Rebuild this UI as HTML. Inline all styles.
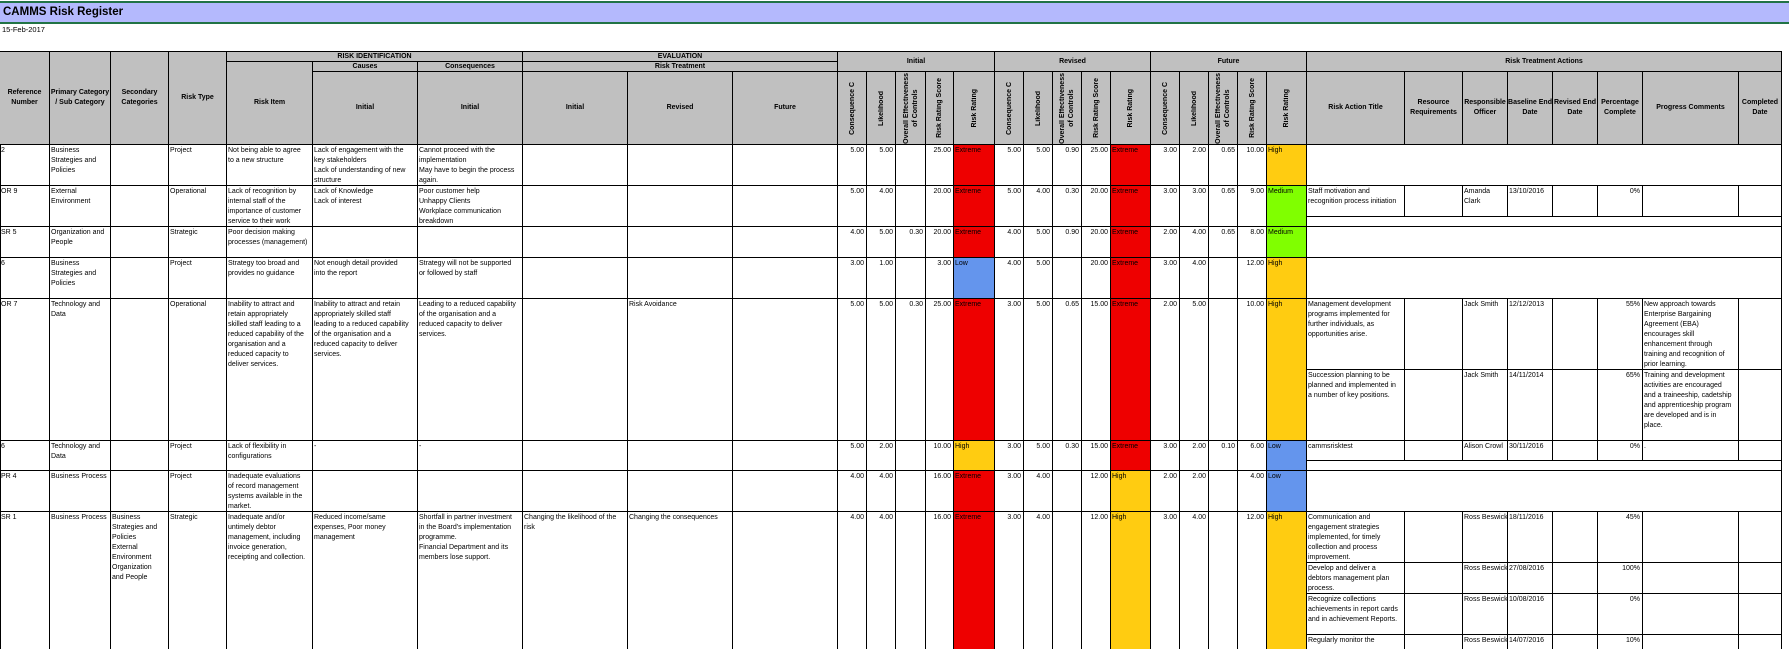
<!DOCTYPE html>
<html style="overflow:hidden;height:649px"><head><meta charset="utf-8"><style>
html,body{overflow:hidden}
body{margin:0;width:1789px;height:649px;overflow:hidden;background:#fff;position:relative;font-family:"Liberation Sans",sans-serif;}
.c{position:absolute;box-sizing:border-box;border-right:1px solid #000;border-bottom:1px solid #000;font-size:7px;line-height:10px;padding:1px 1px;overflow:hidden;white-space:nowrap;color:#000}
.h{background:#c0c0c0;font-weight:bold;display:flex;align-items:center;justify-content:center;text-align:center;padding:0}
.v{writing-mode:vertical-rl;transform:rotate(180deg);font-weight:bold;line-height:9px;text-align:center}
.n{text-align:right;padding-right:2px}
.r{background:#ee0000}.y{background:#ffcc11}.g{background:#80ff00}.b{background:#6495ed}
</style></head><body>
<div style="position:absolute;left:0;top:1px;width:1789px;height:2px;background:#217346"></div>
<div style="position:absolute;left:0;top:3px;width:1789px;height:19px;background:#b4b9fd;font-weight:bold;font-size:11.5px;line-height:19px;padding-left:3px;box-sizing:border-box">CAMMS Risk Register</div>
<div style="position:absolute;left:0;top:22px;width:1789px;height:2px;background:#217346"></div>
<div style="position:absolute;left:2px;top:25px;font-size:7.5px;line-height:10px">15-Feb-2017</div>
<div style="position:absolute;left:0;top:51px;width:1782px;height:598px;border-top:1px solid #000;border-left:1px solid #000;box-sizing:border-box"></div>

<!-- header -->
<div class="c h" style="left:0;top:52px;width:50px;height:93px">Reference<br>Number</div>
<div class="c h" style="left:50px;top:52px;width:61px;height:93px">Primary Category<br>/ Sub Category</div>
<div class="c h" style="left:111px;top:52px;width:58px;height:93px">Secondary<br>Categories</div>
<div class="c h" style="left:169px;top:52px;width:58px;height:93px">Risk Type</div>
<div class="c h" style="left:227px;top:52px;width:296px;height:10px">RISK IDENTIFICATION</div>
<div class="c h" style="left:227px;top:62px;width:86px;height:83px">Risk Item</div>
<div class="c h" style="left:313px;top:62px;width:105px;height:10px">Causes</div>
<div class="c h" style="left:418px;top:62px;width:105px;height:10px">Consequences</div>
<div class="c h" style="left:313px;top:72px;width:105px;height:73px">Initial</div>
<div class="c h" style="left:418px;top:72px;width:105px;height:73px">Initial</div>
<div class="c h" style="left:523px;top:52px;width:315px;height:10px">EVALUATION</div>
<div class="c h" style="left:523px;top:62px;width:315px;height:10px">Risk Treatment</div>
<div class="c h" style="left:523px;top:72px;width:105px;height:73px">Initial</div>
<div class="c h" style="left:628px;top:72px;width:105px;height:73px">Revised</div>
<div class="c h" style="left:733px;top:72px;width:105px;height:73px">Future</div>
<div class="c h" style="left:838px;top:52px;width:157px;height:20px">Initial</div>
<div class="c h" style="left:995px;top:52px;width:156px;height:20px">Revised</div>
<div class="c h" style="left:1151px;top:52px;width:156px;height:20px">Future</div>
<div class="c h" style="left:1307px;top:52px;width:475px;height:20px">Risk Treatment Actions</div>

<div class="c h" style="left:838px;top:72px;width:29px;height:73px"><span class="v">Consequence C</span></div>
<div class="c h" style="left:867px;top:72px;width:29px;height:73px"><span class="v">Likelihood</span></div>
<div class="c h" style="left:896px;top:72px;width:30px;height:73px"><span class="v">Overall Effectiveness<br>of Controls</span></div>
<div class="c h" style="left:926px;top:72px;width:28px;height:73px"><span class="v">Risk Rating Score</span></div>
<div class="c h" style="left:954px;top:72px;width:41px;height:73px"><span class="v">Risk Rating</span></div>
<div class="c h" style="left:995px;top:72px;width:29px;height:73px"><span class="v">Consequence C</span></div>
<div class="c h" style="left:1024px;top:72px;width:29px;height:73px"><span class="v">Likelihood</span></div>
<div class="c h" style="left:1053px;top:72px;width:29px;height:73px"><span class="v">Overall Effectiveness<br>of Controls</span></div>
<div class="c h" style="left:1082px;top:72px;width:29px;height:73px"><span class="v">Risk Rating Score</span></div>
<div class="c h" style="left:1111px;top:72px;width:40px;height:73px"><span class="v">Risk Rating</span></div>
<div class="c h" style="left:1151px;top:72px;width:29px;height:73px"><span class="v">Consequence C</span></div>
<div class="c h" style="left:1180px;top:72px;width:29px;height:73px"><span class="v">Likelihood</span></div>
<div class="c h" style="left:1209px;top:72px;width:29px;height:73px"><span class="v">Overall Effectiveness<br>of Controls</span></div>
<div class="c h" style="left:1238px;top:72px;width:29px;height:73px"><span class="v">Risk Rating Score</span></div>
<div class="c h" style="left:1267px;top:72px;width:40px;height:73px"><span class="v">Risk Rating</span></div>
<div class="c h" style="left:1307px;top:72px;width:98px;height:73px">Risk Action Title</div>
<div class="c h" style="left:1405px;top:72px;width:58px;height:73px">Resource<br>Requirements</div>
<div class="c h" style="left:1463px;top:72px;width:45px;height:73px">Responsible<br>Officer</div>
<div class="c h" style="left:1508px;top:72px;width:45px;height:73px">Baseline End<br>Date</div>
<div class="c h" style="left:1553px;top:72px;width:45px;height:73px">Revised End<br>Date</div>
<div class="c h" style="left:1598px;top:72px;width:45px;height:73px">Percentage<br>Complete</div>
<div class="c h" style="left:1643px;top:72px;width:96px;height:73px">Progress Comments</div>
<div class="c h" style="left:1739px;top:72px;width:43px;height:73px">Completed<br>Date</div>

<!-- Row 1 -->
<div class="c" style="left:0;top:145px;width:50px;height:41px">2</div>
<div class="c" style="left:50px;top:145px;width:61px;height:41px">Business<br>Strategies and<br>Policies</div>
<div class="c" style="left:111px;top:145px;width:58px;height:41px"></div>
<div class="c" style="left:169px;top:145px;width:58px;height:41px">Project</div>
<div class="c" style="left:227px;top:145px;width:86px;height:41px">Not being able to agree<br>to a new structure</div>
<div class="c" style="left:313px;top:145px;width:105px;height:41px">Lack of engagement with the<br>key stakeholders<br>Lack of understanding of new<br>structure</div>
<div class="c" style="left:418px;top:145px;width:105px;height:41px">Cannot proceed with the<br>implementation<br>May have to begin the process<br>again.</div>
<div class="c" style="left:523px;top:145px;width:105px;height:41px"></div>
<div class="c" style="left:628px;top:145px;width:105px;height:41px"></div>
<div class="c" style="left:733px;top:145px;width:105px;height:41px"></div>
<div class="c n" style="left:838px;top:145px;width:29px;height:41px">5.00</div>
<div class="c n" style="left:867px;top:145px;width:29px;height:41px">5.00</div>
<div class="c n" style="left:896px;top:145px;width:30px;height:41px"></div>
<div class="c n" style="left:926px;top:145px;width:28px;height:41px">25.00</div>
<div class="c r" style="left:954px;top:145px;width:41px;height:41px">Extreme</div>
<div class="c n" style="left:995px;top:145px;width:29px;height:41px">5.00</div>
<div class="c n" style="left:1024px;top:145px;width:29px;height:41px">5.00</div>
<div class="c n" style="left:1053px;top:145px;width:29px;height:41px">0.90</div>
<div class="c n" style="left:1082px;top:145px;width:29px;height:41px">25.00</div>
<div class="c r" style="left:1111px;top:145px;width:40px;height:41px">Extreme</div>
<div class="c n" style="left:1151px;top:145px;width:29px;height:41px">3.00</div>
<div class="c n" style="left:1180px;top:145px;width:29px;height:41px">2.00</div>
<div class="c n" style="left:1209px;top:145px;width:29px;height:41px">0.65</div>
<div class="c n" style="left:1238px;top:145px;width:29px;height:41px">10.00</div>
<div class="c y" style="left:1267px;top:145px;width:40px;height:41px">High</div>
<div class="c" style="left:1307px;top:145px;width:475px;height:41px"></div>

<!-- Row 2 -->
<div class="c" style="left:0;top:186px;width:50px;height:41px">OR 9</div>
<div class="c" style="left:50px;top:186px;width:61px;height:41px">External<br>Environment</div>
<div class="c" style="left:111px;top:186px;width:58px;height:41px"></div>
<div class="c" style="left:169px;top:186px;width:58px;height:41px">Operational</div>
<div class="c" style="left:227px;top:186px;width:86px;height:41px">Lack of recognition by<br>internal staff of the<br>importance of customer<br>service to their work</div>
<div class="c" style="left:313px;top:186px;width:105px;height:41px">Lack of Knowledge<br>Lack of interest</div>
<div class="c" style="left:418px;top:186px;width:105px;height:41px">Poor customer help<br>Unhappy Clients<br>Workplace communication<br>breakdown</div>
<div class="c" style="left:523px;top:186px;width:105px;height:41px"></div>
<div class="c" style="left:628px;top:186px;width:105px;height:41px"></div>
<div class="c" style="left:733px;top:186px;width:105px;height:41px"></div>
<div class="c n" style="left:838px;top:186px;width:29px;height:41px">5.00</div>
<div class="c n" style="left:867px;top:186px;width:29px;height:41px">4.00</div>
<div class="c n" style="left:896px;top:186px;width:30px;height:41px"></div>
<div class="c n" style="left:926px;top:186px;width:28px;height:41px">20.00</div>
<div class="c r" style="left:954px;top:186px;width:41px;height:41px">Extreme</div>
<div class="c n" style="left:995px;top:186px;width:29px;height:41px">5.00</div>
<div class="c n" style="left:1024px;top:186px;width:29px;height:41px">4.00</div>
<div class="c n" style="left:1053px;top:186px;width:29px;height:41px">0.30</div>
<div class="c n" style="left:1082px;top:186px;width:29px;height:41px">20.00</div>
<div class="c r" style="left:1111px;top:186px;width:40px;height:41px">Extreme</div>
<div class="c n" style="left:1151px;top:186px;width:29px;height:41px">3.00</div>
<div class="c n" style="left:1180px;top:186px;width:29px;height:41px">3.00</div>
<div class="c n" style="left:1209px;top:186px;width:29px;height:41px">0.65</div>
<div class="c n" style="left:1238px;top:186px;width:29px;height:41px">9.00</div>
<div class="c g" style="left:1267px;top:186px;width:40px;height:41px">Medium</div>
<div class="c" style="left:1307px;top:186px;width:98px;height:31px">Staff motivation and<br>recognition process initiation</div>
<div class="c" style="left:1405px;top:186px;width:58px;height:31px"></div>
<div class="c" style="left:1463px;top:186px;width:45px;height:31px">Amanda<br>Clark</div>
<div class="c" style="left:1508px;top:186px;width:45px;height:31px">13/10/2016</div>
<div class="c" style="left:1553px;top:186px;width:45px;height:31px"></div>
<div class="c n" style="left:1598px;top:186px;width:45px;height:31px">0%</div>
<div class="c" style="left:1643px;top:186px;width:96px;height:31px"></div>
<div class="c" style="left:1739px;top:186px;width:43px;height:31px"></div>
<div class="c" style="left:1307px;top:217px;width:475px;height:10px"></div>

<!-- Row 3 -->
<div class="c" style="left:0;top:227px;width:50px;height:31px">SR 5</div>
<div class="c" style="left:50px;top:227px;width:61px;height:31px">Organization and<br>People</div>
<div class="c" style="left:111px;top:227px;width:58px;height:31px"></div>
<div class="c" style="left:169px;top:227px;width:58px;height:31px">Strategic</div>
<div class="c" style="left:227px;top:227px;width:86px;height:31px">Poor decision making<br>processes (management)</div>
<div class="c" style="left:313px;top:227px;width:105px;height:31px"></div>
<div class="c" style="left:418px;top:227px;width:105px;height:31px"></div>
<div class="c" style="left:523px;top:227px;width:105px;height:31px"></div>
<div class="c" style="left:628px;top:227px;width:105px;height:31px"></div>
<div class="c" style="left:733px;top:227px;width:105px;height:31px"></div>
<div class="c n" style="left:838px;top:227px;width:29px;height:31px">4.00</div>
<div class="c n" style="left:867px;top:227px;width:29px;height:31px">5.00</div>
<div class="c n" style="left:896px;top:227px;width:30px;height:31px">0.30</div>
<div class="c n" style="left:926px;top:227px;width:28px;height:31px">20.00</div>
<div class="c r" style="left:954px;top:227px;width:41px;height:31px">Extreme</div>
<div class="c n" style="left:995px;top:227px;width:29px;height:31px">4.00</div>
<div class="c n" style="left:1024px;top:227px;width:29px;height:31px">5.00</div>
<div class="c n" style="left:1053px;top:227px;width:29px;height:31px">0.90</div>
<div class="c n" style="left:1082px;top:227px;width:29px;height:31px">20.00</div>
<div class="c r" style="left:1111px;top:227px;width:40px;height:31px">Extreme</div>
<div class="c n" style="left:1151px;top:227px;width:29px;height:31px">2.00</div>
<div class="c n" style="left:1180px;top:227px;width:29px;height:31px">4.00</div>
<div class="c n" style="left:1209px;top:227px;width:29px;height:31px">0.65</div>
<div class="c n" style="left:1238px;top:227px;width:29px;height:31px">8.00</div>
<div class="c g" style="left:1267px;top:227px;width:40px;height:31px">Medium</div>
<div class="c" style="left:1307px;top:227px;width:475px;height:31px"></div>

<!-- Row 4 -->
<div class="c" style="left:0;top:258px;width:50px;height:41px">6</div>
<div class="c" style="left:50px;top:258px;width:61px;height:41px">Business<br>Strategies and<br>Policies</div>
<div class="c" style="left:111px;top:258px;width:58px;height:41px"></div>
<div class="c" style="left:169px;top:258px;width:58px;height:41px">Project</div>
<div class="c" style="left:227px;top:258px;width:86px;height:41px">Strategy too broad and<br>provides no guidance</div>
<div class="c" style="left:313px;top:258px;width:105px;height:41px">Not enough detail provided<br>into the report</div>
<div class="c" style="left:418px;top:258px;width:105px;height:41px">Strategy will not be supported<br>or followed by staff</div>
<div class="c" style="left:523px;top:258px;width:105px;height:41px"></div>
<div class="c" style="left:628px;top:258px;width:105px;height:41px"></div>
<div class="c" style="left:733px;top:258px;width:105px;height:41px"></div>
<div class="c n" style="left:838px;top:258px;width:29px;height:41px">3.00</div>
<div class="c n" style="left:867px;top:258px;width:29px;height:41px">1.00</div>
<div class="c n" style="left:896px;top:258px;width:30px;height:41px"></div>
<div class="c n" style="left:926px;top:258px;width:28px;height:41px">3.00</div>
<div class="c b" style="left:954px;top:258px;width:41px;height:41px">Low</div>
<div class="c n" style="left:995px;top:258px;width:29px;height:41px">4.00</div>
<div class="c n" style="left:1024px;top:258px;width:29px;height:41px">5.00</div>
<div class="c n" style="left:1053px;top:258px;width:29px;height:41px"></div>
<div class="c n" style="left:1082px;top:258px;width:29px;height:41px">20.00</div>
<div class="c r" style="left:1111px;top:258px;width:40px;height:41px">Extreme</div>
<div class="c n" style="left:1151px;top:258px;width:29px;height:41px">3.00</div>
<div class="c n" style="left:1180px;top:258px;width:29px;height:41px">4.00</div>
<div class="c n" style="left:1209px;top:258px;width:29px;height:41px"></div>
<div class="c n" style="left:1238px;top:258px;width:29px;height:41px">12.00</div>
<div class="c y" style="left:1267px;top:258px;width:40px;height:41px">High</div>
<div class="c" style="left:1307px;top:258px;width:475px;height:41px"></div>

<!-- Row 5 -->
<div class="c" style="left:0;top:299px;width:50px;height:142px">OR 7</div>
<div class="c" style="left:50px;top:299px;width:61px;height:142px">Technology and<br>Data</div>
<div class="c" style="left:111px;top:299px;width:58px;height:142px"></div>
<div class="c" style="left:169px;top:299px;width:58px;height:142px">Operational</div>
<div class="c" style="left:227px;top:299px;width:86px;height:142px">Inability to attract and<br>retain appropriately<br>skilled staff leading to a<br>reduced capability of the<br>organisation and a<br>reduced capacity to<br>deliver services.</div>
<div class="c" style="left:313px;top:299px;width:105px;height:142px">Inability to attract and retain<br>appropriately skilled staff<br>leading to a reduced capability<br>of the organisation and a<br>reduced capacity to deliver<br>services.</div>
<div class="c" style="left:418px;top:299px;width:105px;height:142px">Leading to a reduced capability<br>of the organisation and a<br>reduced capacity to deliver<br>services.</div>
<div class="c" style="left:523px;top:299px;width:105px;height:142px"></div>
<div class="c" style="left:628px;top:299px;width:105px;height:142px">Risk Avoidance</div>
<div class="c" style="left:733px;top:299px;width:105px;height:142px"></div>
<div class="c n" style="left:838px;top:299px;width:29px;height:142px">5.00</div>
<div class="c n" style="left:867px;top:299px;width:29px;height:142px">5.00</div>
<div class="c n" style="left:896px;top:299px;width:30px;height:142px">0.30</div>
<div class="c n" style="left:926px;top:299px;width:28px;height:142px">25.00</div>
<div class="c r" style="left:954px;top:299px;width:41px;height:142px">Extreme</div>
<div class="c n" style="left:995px;top:299px;width:29px;height:142px">3.00</div>
<div class="c n" style="left:1024px;top:299px;width:29px;height:142px">5.00</div>
<div class="c n" style="left:1053px;top:299px;width:29px;height:142px">0.65</div>
<div class="c n" style="left:1082px;top:299px;width:29px;height:142px">15.00</div>
<div class="c r" style="left:1111px;top:299px;width:40px;height:142px">Extreme</div>
<div class="c n" style="left:1151px;top:299px;width:29px;height:142px">2.00</div>
<div class="c n" style="left:1180px;top:299px;width:29px;height:142px">5.00</div>
<div class="c n" style="left:1209px;top:299px;width:29px;height:142px"></div>
<div class="c n" style="left:1238px;top:299px;width:29px;height:142px">10.00</div>
<div class="c y" style="left:1267px;top:299px;width:40px;height:142px">High</div>
<div class="c" style="left:1307px;top:299px;width:98px;height:71px">Management development<br>programs implemented for<br>further individuals, as<br>opportunities arise.</div>
<div class="c" style="left:1405px;top:299px;width:58px;height:71px"></div>
<div class="c" style="left:1463px;top:299px;width:45px;height:71px">Jack Smith</div>
<div class="c" style="left:1508px;top:299px;width:45px;height:71px">12/12/2013</div>
<div class="c" style="left:1553px;top:299px;width:45px;height:71px"></div>
<div class="c n" style="left:1598px;top:299px;width:45px;height:71px">55%</div>
<div class="c" style="left:1643px;top:299px;width:96px;height:71px">New approach towards<br>Enterprise Bargaining<br>Agreement (EBA)<br>encourages skill<br>enhancement through<br>training and recognition of<br>prior learning.</div>
<div class="c" style="left:1739px;top:299px;width:43px;height:71px"></div>
<div class="c" style="left:1307px;top:370px;width:98px;height:71px">Succession planning to be<br>planned and implemented in<br>a number of key positions.</div>
<div class="c" style="left:1405px;top:370px;width:58px;height:71px"></div>
<div class="c" style="left:1463px;top:370px;width:45px;height:71px">Jack Smith</div>
<div class="c" style="left:1508px;top:370px;width:45px;height:71px">14/11/2014</div>
<div class="c" style="left:1553px;top:370px;width:45px;height:71px"></div>
<div class="c n" style="left:1598px;top:370px;width:45px;height:71px">65%</div>
<div class="c" style="left:1643px;top:370px;width:96px;height:71px">Training and development<br>activities are encouraged<br>and a traineeship, cadetship<br>and apprenticeship program<br>are developed and is in<br>place.</div>
<div class="c" style="left:1739px;top:370px;width:43px;height:71px"></div>

<!-- Row 6 -->
<div class="c" style="left:0;top:441px;width:50px;height:30px">6</div>
<div class="c" style="left:50px;top:441px;width:61px;height:30px">Technology and<br>Data</div>
<div class="c" style="left:111px;top:441px;width:58px;height:30px"></div>
<div class="c" style="left:169px;top:441px;width:58px;height:30px">Project</div>
<div class="c" style="left:227px;top:441px;width:86px;height:30px">Lack of flexibility in<br>configurations</div>
<div class="c" style="left:313px;top:441px;width:105px;height:30px">-</div>
<div class="c" style="left:418px;top:441px;width:105px;height:30px">-</div>
<div class="c" style="left:523px;top:441px;width:105px;height:30px"></div>
<div class="c" style="left:628px;top:441px;width:105px;height:30px"></div>
<div class="c" style="left:733px;top:441px;width:105px;height:30px"></div>
<div class="c n" style="left:838px;top:441px;width:29px;height:30px">5.00</div>
<div class="c n" style="left:867px;top:441px;width:29px;height:30px">2.00</div>
<div class="c n" style="left:896px;top:441px;width:30px;height:30px"></div>
<div class="c n" style="left:926px;top:441px;width:28px;height:30px">10.00</div>
<div class="c y" style="left:954px;top:441px;width:41px;height:30px">High</div>
<div class="c n" style="left:995px;top:441px;width:29px;height:30px">3.00</div>
<div class="c n" style="left:1024px;top:441px;width:29px;height:30px">5.00</div>
<div class="c n" style="left:1053px;top:441px;width:29px;height:30px">0.30</div>
<div class="c n" style="left:1082px;top:441px;width:29px;height:30px">15.00</div>
<div class="c r" style="left:1111px;top:441px;width:40px;height:30px">Extreme</div>
<div class="c n" style="left:1151px;top:441px;width:29px;height:30px">3.00</div>
<div class="c n" style="left:1180px;top:441px;width:29px;height:30px">2.00</div>
<div class="c n" style="left:1209px;top:441px;width:29px;height:30px">0.10</div>
<div class="c n" style="left:1238px;top:441px;width:29px;height:30px">6.00</div>
<div class="c b" style="left:1267px;top:441px;width:40px;height:30px">Low</div>
<div class="c" style="left:1307px;top:441px;width:98px;height:20px">cammsrisktest</div>
<div class="c" style="left:1405px;top:441px;width:58px;height:20px"></div>
<div class="c" style="left:1463px;top:441px;width:45px;height:20px">Alison Crowl</div>
<div class="c" style="left:1508px;top:441px;width:45px;height:20px">30/11/2016</div>
<div class="c" style="left:1553px;top:441px;width:45px;height:20px"></div>
<div class="c n" style="left:1598px;top:441px;width:45px;height:20px">0%</div>
<div class="c" style="left:1643px;top:441px;width:96px;height:20px">.</div>
<div class="c" style="left:1739px;top:441px;width:43px;height:20px"></div>
<div class="c" style="left:1307px;top:461px;width:475px;height:10px"></div>

<!-- Row 7 -->
<div class="c" style="left:0;top:471px;width:50px;height:41px">PR 4</div>
<div class="c" style="left:50px;top:471px;width:61px;height:41px">Business Process</div>
<div class="c" style="left:111px;top:471px;width:58px;height:41px"></div>
<div class="c" style="left:169px;top:471px;width:58px;height:41px">Project</div>
<div class="c" style="left:227px;top:471px;width:86px;height:41px">Inadequate evaluations<br>of record management<br>systems available in the<br>market.</div>
<div class="c" style="left:313px;top:471px;width:105px;height:41px"></div>
<div class="c" style="left:418px;top:471px;width:105px;height:41px"></div>
<div class="c" style="left:523px;top:471px;width:105px;height:41px"></div>
<div class="c" style="left:628px;top:471px;width:105px;height:41px"></div>
<div class="c" style="left:733px;top:471px;width:105px;height:41px"></div>
<div class="c n" style="left:838px;top:471px;width:29px;height:41px">4.00</div>
<div class="c n" style="left:867px;top:471px;width:29px;height:41px">4.00</div>
<div class="c n" style="left:896px;top:471px;width:30px;height:41px"></div>
<div class="c n" style="left:926px;top:471px;width:28px;height:41px">16.00</div>
<div class="c r" style="left:954px;top:471px;width:41px;height:41px">Extreme</div>
<div class="c n" style="left:995px;top:471px;width:29px;height:41px">3.00</div>
<div class="c n" style="left:1024px;top:471px;width:29px;height:41px">4.00</div>
<div class="c n" style="left:1053px;top:471px;width:29px;height:41px"></div>
<div class="c n" style="left:1082px;top:471px;width:29px;height:41px">12.00</div>
<div class="c y" style="left:1111px;top:471px;width:40px;height:41px">High</div>
<div class="c n" style="left:1151px;top:471px;width:29px;height:41px">2.00</div>
<div class="c n" style="left:1180px;top:471px;width:29px;height:41px">2.00</div>
<div class="c n" style="left:1209px;top:471px;width:29px;height:41px"></div>
<div class="c n" style="left:1238px;top:471px;width:29px;height:41px">4.00</div>
<div class="c b" style="left:1267px;top:471px;width:40px;height:41px">Low</div>
<div class="c" style="left:1307px;top:471px;width:475px;height:41px"></div>

<!-- Row 8 -->
<div class="c" style="left:0;top:512px;width:50px;height:138px">SR 1</div>
<div class="c" style="left:50px;top:512px;width:61px;height:138px">Business Process</div>
<div class="c" style="left:111px;top:512px;width:58px;height:138px">Business<br>Strategies and<br>Policies<br>External<br>Environment<br>Organization<br>and People</div>
<div class="c" style="left:169px;top:512px;width:58px;height:138px">Strategic</div>
<div class="c" style="left:227px;top:512px;width:86px;height:138px">Inadequate and/or<br>untimely debtor<br>management, including<br>invoice generation,<br>receipting and collection.</div>
<div class="c" style="left:313px;top:512px;width:105px;height:138px">Reduced income/same<br>expenses, Poor money<br>management</div>
<div class="c" style="left:418px;top:512px;width:105px;height:138px">Shortfall in partner investment<br>in the Board's implementation<br>programme.<br>Financial Department and its<br>members lose support.</div>
<div class="c" style="left:523px;top:512px;width:105px;height:138px">Changing the likelihood of the<br>risk</div>
<div class="c" style="left:628px;top:512px;width:105px;height:138px">Changing the consequences</div>
<div class="c" style="left:733px;top:512px;width:105px;height:138px"></div>
<div class="c n" style="left:838px;top:512px;width:29px;height:138px">4.00</div>
<div class="c n" style="left:867px;top:512px;width:29px;height:138px">4.00</div>
<div class="c n" style="left:896px;top:512px;width:30px;height:138px"></div>
<div class="c n" style="left:926px;top:512px;width:28px;height:138px">16.00</div>
<div class="c r" style="left:954px;top:512px;width:41px;height:138px">Extreme</div>
<div class="c n" style="left:995px;top:512px;width:29px;height:138px">3.00</div>
<div class="c n" style="left:1024px;top:512px;width:29px;height:138px">4.00</div>
<div class="c n" style="left:1053px;top:512px;width:29px;height:138px"></div>
<div class="c n" style="left:1082px;top:512px;width:29px;height:138px">12.00</div>
<div class="c y" style="left:1111px;top:512px;width:40px;height:138px">High</div>
<div class="c n" style="left:1151px;top:512px;width:29px;height:138px">3.00</div>
<div class="c n" style="left:1180px;top:512px;width:29px;height:138px">4.00</div>
<div class="c n" style="left:1209px;top:512px;width:29px;height:138px"></div>
<div class="c n" style="left:1238px;top:512px;width:29px;height:138px">12.00</div>
<div class="c y" style="left:1267px;top:512px;width:40px;height:138px">High</div>

<div class="c" style="left:1307px;top:512px;width:98px;height:51px">Communication and<br>engagement strategies<br>implemented, for timely<br>collection and process<br>improvement.</div>
<div class="c" style="left:1405px;top:512px;width:58px;height:51px"></div>
<div class="c" style="left:1463px;top:512px;width:45px;height:51px">Ross Beswick</div>
<div class="c" style="left:1508px;top:512px;width:45px;height:51px">18/11/2016</div>
<div class="c" style="left:1553px;top:512px;width:45px;height:51px"></div>
<div class="c n" style="left:1598px;top:512px;width:45px;height:51px">45%</div>
<div class="c" style="left:1643px;top:512px;width:96px;height:51px"></div>
<div class="c" style="left:1739px;top:512px;width:43px;height:51px"></div>

<div class="c" style="left:1307px;top:563px;width:98px;height:31px">Develop and deliver a<br>debtors management plan<br>process.</div>
<div class="c" style="left:1405px;top:563px;width:58px;height:31px"></div>
<div class="c" style="left:1463px;top:563px;width:45px;height:31px">Ross Beswick</div>
<div class="c" style="left:1508px;top:563px;width:45px;height:31px">27/08/2016</div>
<div class="c" style="left:1553px;top:563px;width:45px;height:31px"></div>
<div class="c n" style="left:1598px;top:563px;width:45px;height:31px">100%</div>
<div class="c" style="left:1643px;top:563px;width:96px;height:31px"></div>
<div class="c" style="left:1739px;top:563px;width:43px;height:31px"></div>

<div class="c" style="left:1307px;top:594px;width:98px;height:41px">Recognize collections<br>achievements in report cards<br>and in achievement Reports.</div>
<div class="c" style="left:1405px;top:594px;width:58px;height:41px"></div>
<div class="c" style="left:1463px;top:594px;width:45px;height:41px">Ross Beswick</div>
<div class="c" style="left:1508px;top:594px;width:45px;height:41px">10/08/2016</div>
<div class="c" style="left:1553px;top:594px;width:45px;height:41px"></div>
<div class="c n" style="left:1598px;top:594px;width:45px;height:41px">0%</div>
<div class="c" style="left:1643px;top:594px;width:96px;height:41px"></div>
<div class="c" style="left:1739px;top:594px;width:43px;height:41px"></div>

<div class="c" style="left:1307px;top:635px;width:98px;height:15px">Regularly monitor the</div>
<div class="c" style="left:1405px;top:635px;width:58px;height:15px"></div>
<div class="c" style="left:1463px;top:635px;width:45px;height:15px">Ross Beswick</div>
<div class="c" style="left:1508px;top:635px;width:45px;height:15px">14/07/2016</div>
<div class="c" style="left:1553px;top:635px;width:45px;height:15px"></div>
<div class="c n" style="left:1598px;top:635px;width:45px;height:15px">10%</div>
<div class="c" style="left:1643px;top:635px;width:96px;height:15px"></div>
<div class="c" style="left:1739px;top:635px;width:43px;height:15px"></div>
</body></html>
